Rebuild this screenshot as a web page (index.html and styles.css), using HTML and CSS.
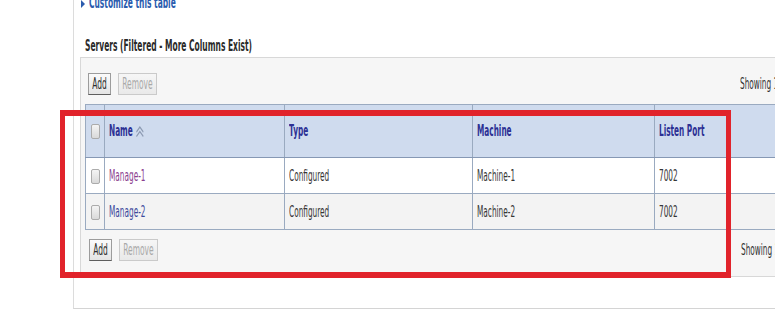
FILE: index.html
```html
<!DOCTYPE html>
<html>
<head>
<meta charset="utf-8">
<link rel="stylesheet" href="styles.css">
</head>
<body>
<div class="frame">
  <div class="customize"><span class="tri"></span><span class="sq">Customize this table</span></div>
  <div class="title"><span class="sq">Servers (Filtered - More Columns Exist)</span></div>
  <div class="panel">
    <div class="toolbar">
      <div class="btns">
        <button class="btn add"><span class="sqc">Add</span></button>
        <button class="btn remove" disabled><span class="sqc">Remove</span></button>
      </div>
      <div class="pager"><span class="sq">Showing 1 to 2 of 2 Previous | Next</span></div>
    </div>
    <table class="grid">
      <colgroup>
        <col class="c-cb"><col class="c-name"><col class="c-type"><col class="c-machine"><col class="c-port">
      </colgroup>
      <thead>
        <tr>
          <th class="cb"><span class="box"></span></th>
          <th><span class="sq">Name<svg class="sort" width="18" height="11" viewBox="0 0 18 11"><path d="M2 6 L9 1 L16 6 M2 10.5 L9 5.5 L16 10.5" fill="none" stroke="#8d9bb3" stroke-width="1.7"/></svg></span></th>
          <th><span class="sq">Type</span></th>
          <th><span class="sq">Machine</span></th>
          <th><span class="sq">Listen Port</span></th>
        </tr>
      </thead>
      <tbody>
        <tr class="odd">
          <td class="cb"><span class="box"></span></td>
          <td><span class="sq link visited">Manage-1</span></td>
          <td><span class="sq">Configured</span></td>
          <td><span class="sq">Machine-1</span></td>
          <td><span class="sq">7002</span></td>
        </tr>
        <tr class="even">
          <td class="cb"><span class="box"></span></td>
          <td><span class="sq link">Manage-2</span></td>
          <td><span class="sq">Configured</span></td>
          <td><span class="sq">Machine-2</span></td>
          <td><span class="sq">7002</span></td>
        </tr>
      </tbody>
    </table>
    <div class="toolbar bottom">
      <div class="btns">
        <button class="btn add"><span class="sqc">Add</span></button>
        <button class="btn remove" disabled><span class="sqc">Remove</span></button>
      </div>
      <div class="pager"><span class="sq">Showing 1 to 2 of 2 Previous | Next</span></div>
    </div>
  </div>
</div>
<div class="annot"></div>
</body>
</html>
```

FILE: styles.css
```css
html, body {
  margin: 0;
  padding: 0;
}
body {
  width: 775px;
  height: 311px;
  overflow: hidden;
  background: #ffffff;
  font-family: "DejaVu Sans", "Liberation Sans", sans-serif;
  font-size: 15px;
  color: #363636;
  position: relative;
}
.sq {
  display: inline-block;
  white-space: nowrap;
  transform: scaleX(0.49);
  transform-origin: 0 50%;
}
.sqc {
  display: inline-block;
  white-space: nowrap;
  transform: scaleX(0.5);
  transform-origin: 50% 50%;
}
.frame {
  display: flow-root;
  margin-left: 73px;
  width: 900px;
  height: 308px;
  border-left: 1px solid #dcdcdc;
  border-bottom: 1px solid #d4d4d4;
}
.customize {
  display: flex;
  align-items: center;
  gap: 4px;
  margin-top: -5px;
  padding-left: 7px;
  height: 17px;
  line-height: 17px;
  color: #2b5cae;
  font-weight: bold;
}
.customize .sq {
  transform: scaleX(0.5);
}
.tri {
  width: 0;
  height: 0;
  border-left: 4px solid #2b5cae;
  border-top: 4px solid transparent;
  border-bottom: 4px solid transparent;
}
.title {
  margin-top: 24px;
  margin-bottom: 1px;
  padding-left: 11px;
  height: 20px;
  line-height: 20px;
  font-size: 16px;
  font-weight: bold;
  color: #2a2a2a;
}
.title .sq {
  transform: scaleX(0.47);
}
.panel {
  margin-left: 6px;
  border: 1px solid #d8d8d8;
  background: #f6f6f6;
  padding: 15px 0 15px 4px;
}
.toolbar {
  display: grid;
  grid-template-columns: 652px auto;
  align-items: center;
  padding-left: 3px;
  height: 22px;
}
.toolbar.bottom {
  margin-top: 9px;
  padding-left: 4px;
}
.btns {
  display: flex;
  gap: 7px;
}
.btn {
  display: flex;
  justify-content: center;
  align-items: center;
  height: 22px;
  padding: 0;
  margin: 0;
  overflow: visible;
  font-family: inherit;
  font-size: 15px;
  border: 1px solid #9c9c9c;
  border-bottom-color: #5e5e5e;
  background: linear-gradient(#fbfbfb, #e4e4e4);
  color: #2e2e2e;
}
.btn.add {
  width: 23px;
}
.btn.remove {
  width: 39px;
  border-color: #cacaca;
  background: linear-gradient(#f6f6f6, #e9e9e9);
  color: #a9a9a9;
}
.pager {
  color: #333333;
}
.grid {
  margin-top: 9px;
  border-collapse: collapse;
  table-layout: fixed;
  width: 880px;
  border: 1px solid #9aaac0;
}
.c-cb { width: 19px; }
.c-name { width: 180px; }
.c-type { width: 188px; }
.c-machine { width: 182px; }
.grid th, .grid td {
  border: 1px solid #9aaac0;
  padding: 0 0 0 4px;
  text-align: left;
  vertical-align: middle;
  overflow: visible;
}
.grid th {
  height: 52px;
  background: #cfdbee;
  color: #2c3094;
  font-weight: bold;
  border-bottom-color: #8698b4;
}
.grid td {
  height: 35px;
}
.grid tr.odd td { background: #ffffff; }
.grid tr.even td { background: #f3f3f3; }
.grid .cb {
  padding: 0;
  text-align: center;
}
.box {
  display: inline-block;
  vertical-align: middle;
  width: 7px;
  height: 13px;
  border: 1px solid #ababab;
  border-radius: 2px;
  background: linear-gradient(#f4f4f4, #d9d9d9);
}
.sort {
  margin-left: 6px;
  vertical-align: -1px;
}
.link { color: #3b4a9c; }
.link.visited { color: #8b3f8f; }
.annot {
  position: absolute;
  left: 60px;
  top: 110px;
  width: 661px;
  height: 156px;
  border-style: solid;
  border-color: #e1232b;
  border-width: 6px 5px;
  pointer-events: none;
}
```
